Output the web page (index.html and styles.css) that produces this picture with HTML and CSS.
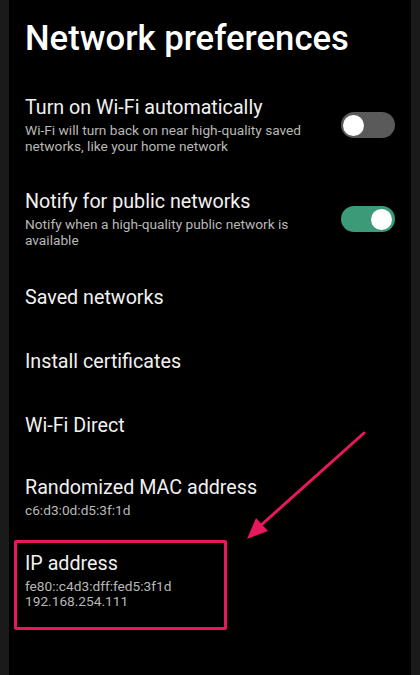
FILE: index.html
```html
<!DOCTYPE html>
<html lang="en">
<head>
<meta charset="UTF-8">
<meta name="viewport" content="width=device-width, initial-scale=1.0">
<title>Network preferences</title>
<link rel="stylesheet" href="styles.css">
</head>
<body>

<div class="screen">
    <h1 class="page-title">Network preferences</h1>

    <div class="list">
        <div class="item two-line">
            <div class="text">
                <div class="title">Turn on Wi-Fi automatically</div>
                <div class="summary">Wi-Fi will turn back on near high-quality saved networks, like your home network</div>
            </div>
            <div class="switch"><span class="knob"></span></div>
        </div>

        <div class="item two-line">
            <div class="text">
                <div class="title">Notify for public networks</div>
                <div class="summary">Notify when a high-quality public network is available</div>
            </div>
            <div class="switch on"><span class="knob"></span></div>
        </div>

        <div class="item">
            <div class="text"><div class="title">Saved networks</div></div>
        </div>

        <div class="item">
            <div class="text"><div class="title">Install certificates</div></div>
        </div>

        <div class="item">
            <div class="text"><div class="title">Wi-Fi Direct</div></div>
        </div>

        <div class="item two-line">
            <div class="text">
                <div class="title">Randomized MAC address</div>
                <div class="summary">c6:d3:0d:d5:3f:1d</div>
            </div>
        </div>

        <div class="item two-line marked">
            <div class="text">
                <div class="title">IP address</div>
                <div class="summary">fe80::c4d3:dff:fed5:3f1d<br>192.168.254.111</div>
            </div>
        </div>
    </div>

    <!-- pointer to the IP address row -->
    <svg class="pointer" width="402" height="675" viewBox="0 0 402 675">
        <line x1="355" y1="433" x2="250" y2="527" stroke="#e8185c" stroke-width="3" stroke-linecap="round"/>
        <polygon points="238,539 247,518 259,531" fill="#e8185c"/>
    </svg>
</div>

</body>
</html>
```

FILE: styles.css
```css
body {
    margin: 0;
    background-color: #1a1a1a;
    font-family: Roboto, "Noto Sans", sans-serif;
}

.screen {
    position: relative;
    margin: 0 9px;
    height: 675px;
    padding: 0 16px;
    background-color: #000;
    color: #f1f1f1;
    overflow: hidden;
}

.page-title {
    margin: 0;
    padding-top: 18px;
    font-size: 34.7px;
    line-height: 40px;
    font-weight: 500;
    color: #fff;
}

.list {
    display: flex;
    flex-direction: column;
    margin-top: 20px;
}

.item {
    display: flex;
    align-items: center;
    justify-content: space-between;
    padding: 20px 0;
}

.item.two-line {
    padding: 18px 0;
}

.title {
    font-size: 19.7px;
    line-height: 24px;
}

.summary {
    margin-top: 3px;
    max-width: 300px;
    font-size: 13.7px;
    line-height: 15.5px;
    color: #b8b8b8;
}

.item.marked {
    align-self: flex-start;
    width: 189px;
    margin-left: -11px;
    margin-top: 3px;
    padding: 9px 10px 17px 8px;
    border: 3px solid #e8185c;
    border-radius: 2px;
}

.switch {
    position: relative;
    flex-shrink: 0;
    width: 54px;
    height: 26px;
    border-radius: 13px;
    background-color: #5a5a5a;
}

.switch .knob {
    position: absolute;
    top: 2.5px;
    left: 2px;
    width: 21px;
    height: 21px;
    border-radius: 50%;
    background-color: #fff;
}

.switch.on {
    background-color: #3c9a78;
}

.switch.on .knob {
    left: auto;
    right: 3px;
}

.pointer {
    position: absolute;
    top: 0;
    left: 0;
    pointer-events: none;
}
```
